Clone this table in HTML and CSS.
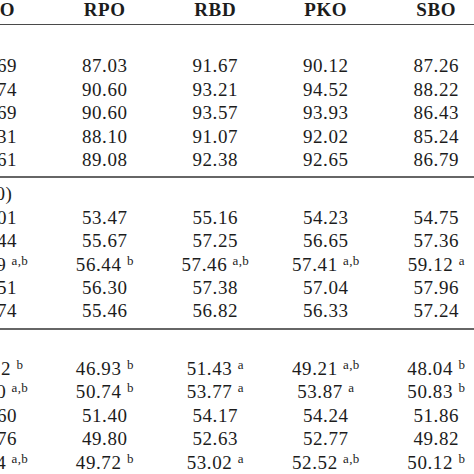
FILE: index.html
```html
<!DOCTYPE html>
<html>
<head>
<meta charset="utf-8">
<link rel="stylesheet" href="styles.css">
</head>
<body>
<div class="table">
  <div class="row head">
    <div class="cell">CPO</div>
    <div class="cell">RPO</div>
    <div class="cell">RBD</div>
    <div class="cell">PKO</div>
    <div class="cell">SBO</div>
  </div>

  <div class="section first">
    <div class="row"><div class="cell"></div><div class="cell"></div><div class="cell"></div><div class="cell"></div><div class="cell"></div></div>
    <div class="row"><div class="cell">88.69</div><div class="cell">87.03</div><div class="cell">91.67</div><div class="cell">90.12</div><div class="cell">87.26</div></div>
    <div class="row"><div class="cell">89.74</div><div class="cell">90.60</div><div class="cell">93.21</div><div class="cell">94.52</div><div class="cell">88.22</div></div>
    <div class="row"><div class="cell">89.69</div><div class="cell">90.60</div><div class="cell">93.57</div><div class="cell">93.93</div><div class="cell">86.43</div></div>
    <div class="row"><div class="cell">88.31</div><div class="cell">88.10</div><div class="cell">91.07</div><div class="cell">92.02</div><div class="cell">85.24</div></div>
    <div class="row"><div class="cell">88.61</div><div class="cell">89.08</div><div class="cell">92.38</div><div class="cell">92.65</div><div class="cell">86.79</div></div>
  </div>

  <div class="section">
    <div class="row"><div class="cell label">(180)</div><div class="cell"></div><div class="cell"></div><div class="cell"></div><div class="cell"></div></div>
    <div class="row"><div class="cell">54.01</div><div class="cell">53.47</div><div class="cell">55.16</div><div class="cell">54.23</div><div class="cell">54.75</div></div>
    <div class="row"><div class="cell">56.44</div><div class="cell">55.67</div><div class="cell">57.25</div><div class="cell">56.65</div><div class="cell">57.36</div></div>
    <div class="row"><div class="cell">57.09 <span class="sup">a,b</span></div><div class="cell">56.44 <span class="sup">b</span></div><div class="cell">57.46 <span class="sup">a,b</span></div><div class="cell">57.41 <span class="sup">a,b</span></div><div class="cell">59.12 <span class="sup">a</span></div></div>
    <div class="row"><div class="cell">56.51</div><div class="cell">56.30</div><div class="cell">57.38</div><div class="cell">57.04</div><div class="cell">57.96</div></div>
    <div class="row"><div class="cell">55.74</div><div class="cell">55.46</div><div class="cell">56.82</div><div class="cell">56.33</div><div class="cell">57.24</div></div>
  </div>

  <div class="section">
    <div class="row"><div class="cell"></div><div class="cell"></div><div class="cell"></div><div class="cell"></div><div class="cell"></div></div>
    <div class="row"><div class="cell">47.12 <span class="sup">b</span></div><div class="cell">46.93 <span class="sup">b</span></div><div class="cell">51.43 <span class="sup">a</span></div><div class="cell">49.21 <span class="sup">a,b</span></div><div class="cell">48.04 <span class="sup">b</span></div></div>
    <div class="row"><div class="cell">50.10 <span class="sup">a,b</span></div><div class="cell">50.74 <span class="sup">b</span></div><div class="cell">53.77 <span class="sup">a</span></div><div class="cell">53.87 <span class="sup">a</span></div><div class="cell">50.83 <span class="sup">b</span></div></div>
    <div class="row"><div class="cell">51.60</div><div class="cell">51.40</div><div class="cell">54.17</div><div class="cell">54.24</div><div class="cell">51.86</div></div>
    <div class="row"><div class="cell">49.76</div><div class="cell">49.80</div><div class="cell">52.63</div><div class="cell">52.77</div><div class="cell">49.82</div></div>
    <div class="row"><div class="cell">49.84 <span class="sup">a,b</span></div><div class="cell">49.72 <span class="sup">b</span></div><div class="cell">53.02 <span class="sup">a</span></div><div class="cell">52.52 <span class="sup">a,b</span></div><div class="cell">50.12 <span class="sup">b</span></div></div>
  </div>
</div>
</body>
</html>
```

FILE: styles.css
```css
html, body {
  margin: 0;
  padding: 0;
  background: #ffffff;
}

body {
  width: 474px;
  height: 474px;
  overflow: hidden;
  font-family: "Liberation Serif", "Times New Roman", serif;
  font-size: 19px;
  color: #1c1c1c;
}

.table {
  width: 560px;
  margin-left: -61px;
}

.row {
  display: grid;
  grid-template-columns: repeat(5, 110.5px);
  height: 23.4px;
  line-height: 23px;
}

.cell {
  text-align: center;
  white-space: nowrap;
  letter-spacing: 0.6px;
}

.head {
  height: 24px;
  line-height: 20px;
  font-weight: bold;
  letter-spacing: 0.5px;
  border-bottom: 1.5px solid #4a4a4a;
}

.section {
  padding: 4px 0 5px 0;
  border-top: 2px solid #666666;
}

.section.first {
  border-top: none;
  padding-top: 6px;
}

.label {
  text-align: right;
  padding-right: 37px;
}

.sup {
  font-size: 13px;
  letter-spacing: 0.3px;
  vertical-align: 0.5em;
  line-height: 0;
}
```
